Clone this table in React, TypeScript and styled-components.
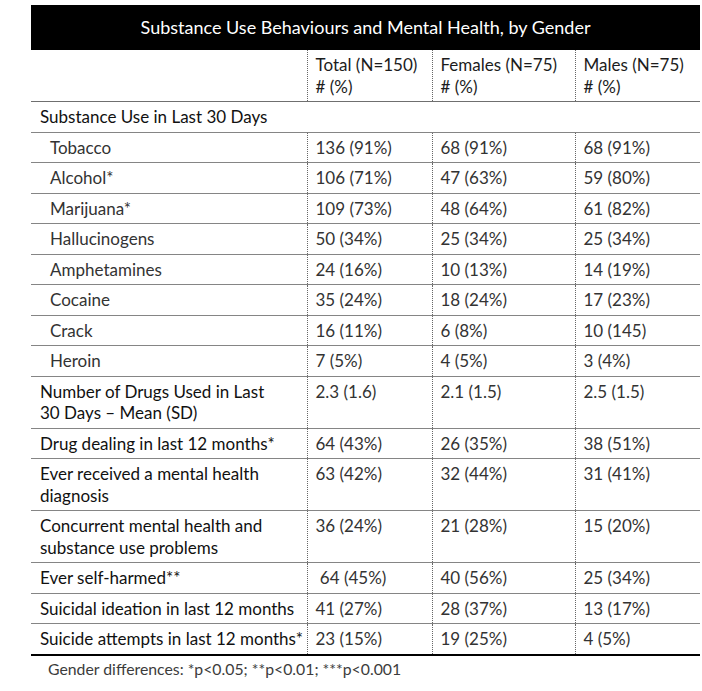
import React from 'react';
import styled, { createGlobalStyle } from 'styled-components';

const GlobalStyle = createGlobalStyle`
  body {
    margin: 0;
    background: #fff;
    font-family: Lato, "Noto Sans", "Liberation Sans", sans-serif;
  }
`;

//外側
const Page = styled.div`
  padding: 5px 2px 0 31px;
  width: 669px;
`;

const Table = styled.table`
  width: 669px;
  border-collapse: collapse;
  table-layout: fixed;
  border-bottom: 2px solid #000;
  font-size: 17px;
  line-height: 21.5px;
  color: #2a2a2a;
`;

const TitleCell = styled.th`
  background: #000;
  color: #fff;
  height: 45px;
  padding: 0;
  font-size: 18px;
  font-weight: 400;
  text-align: center;
`;

const HeadCell = styled.th<{ first?: boolean }>`
  padding: 4px 0 4px 8px;
  text-align: left;
  vertical-align: top;
  font-weight: 400;
  color: #1c1c1c;
  border-bottom: 1px solid #6f6f6f;
  border-left: ${({ first }) => (first ? 'none' : '1px dotted #666')};
  white-space: nowrap;
`;

const Row = styled.tr`
  border-bottom: 1px solid #858585;
`;

const LabelTd = styled.td<{ indent?: boolean }>`
  padding: 4px 0 4px ${({ indent }) => (indent ? '19px' : '9px')};
  color: ${({ indent }) => (indent ? '#333' : '#111')};
  vertical-align: middle;
  white-space: nowrap;
`;

const ValueTd = styled.td`
  padding: 4px 0 4px 8px;
  border-left: 1px dotted #666;
  vertical-align: top;
  color: #333;
  white-space: nowrap;
`;

const SectionTd = styled.td`
  padding: 4px 0 4px 9px;
  color: #111;
`;

const Note = styled.div`
  padding: 3px 0 0 17px;
  font-size: 15.8px;
  color: #3c3c3c;
`;

type rowType = {
  label: string[],
  indent?: boolean,
  values: string[]
}

const substanceRows: rowType[] = [
  { label: ['Tobacco'], indent: true, values: ['136 (91%)', '68 (91%)', '68 (91%)'] },
  { label: ['Alcohol*'], indent: true, values: ['106 (71%)', '47 (63%)', '59 (80%)'] },
  { label: ['Marijuana*'], indent: true, values: ['109 (73%)', '48 (64%)', '61 (82%)'] },
  { label: ['Hallucinogens'], indent: true, values: ['50 (34%)', '25 (34%)', '25 (34%)'] },
  { label: ['Amphetamines'], indent: true, values: ['24 (16%)', '10 (13%)', '14 (19%)'] },
  { label: ['Cocaine'], indent: true, values: ['35 (24%)', '18 (24%)', '17 (23%)'] },
  { label: ['Crack'], indent: true, values: ['16 (11%)', '6 (8%)', '10 (145)'] },
  { label: ['Heroin'], indent: true, values: ['7 (5%)', '4 (5%)', '3 (4%)'] },
];

const otherRows: rowType[] = [
  { label: ['Number of Drugs Used in Last', '30 Days \u2013 Mean (SD)'], values: ['2.3 (1.6)', '2.1 (1.5)', '2.5 (1.5)'] },
  { label: ['Drug dealing in last 12 months*'], values: ['64 (43%)', '26 (35%)', '38 (51%)'] },
  { label: ['Ever received a mental health', 'diagnosis'], values: ['63 (42%)', '32 (44%)', '31 (41%)'] },
  { label: ['Concurrent mental health and', 'substance use problems'], values: ['36 (24%)', '21 (28%)', '15 (20%)'] },
  { label: ['Ever self-harmed**'], values: ['\u00a064 (45%)', '40 (56%)', '25 (34%)'] },
  { label: ['Suicidal ideation in last 12 months'], values: ['41 (27%)', '28 (37%)', '13 (17%)'] },
  { label: ['Suicide attempts in last 12 months*'], values: ['23 (15%)', '19 (25%)', '4 (5%)'] },
];

function DataRow(props: { row: rowType }) {
  const { row } = props;
  return (
    <Row>
      <LabelTd indent={row.indent}>
        {row.label.map((line, i) => (
          <div key={i}>{line}</div>
        ))}
      </LabelTd>
      {row.values.map((v, i) => (
        <ValueTd key={i}>{v}</ValueTd>
      ))}
    </Row>
  );
}

function App() {
  return (
    <Page>
      <GlobalStyle />
      <Table>
        <colgroup>
          <col style={{ width: 276 }} />
          <col style={{ width: 125 }} />
          <col style={{ width: 143 }} />
          <col style={{ width: 125 }} />
        </colgroup>
        <thead>
          <tr>
            <TitleCell colSpan={4}>Substance Use Behaviours and Mental Health, by Gender</TitleCell>
          </tr>
          <tr>
            <HeadCell first></HeadCell>
            <HeadCell>Total (N=150)<div># (%)</div></HeadCell>
            <HeadCell>Females (N=75)<div># (%)</div></HeadCell>
            <HeadCell>Males (N=75)<div># (%)</div></HeadCell>
          </tr>
        </thead>
        <tbody>
          <Row>
            <SectionTd colSpan={4}>Substance Use in Last 30 Days</SectionTd>
          </Row>
          {substanceRows.map((r, i) => <DataRow key={'s' + i} row={r} />)}
          {otherRows.map((r, i) => <DataRow key={'o' + i} row={r} />)}
        </tbody>
      </Table>
      <Note>Gender differences: *p&lt;0.05; **p&lt;0.01; ***p&lt;0.001</Note>
    </Page>
  );
}

export default App;
